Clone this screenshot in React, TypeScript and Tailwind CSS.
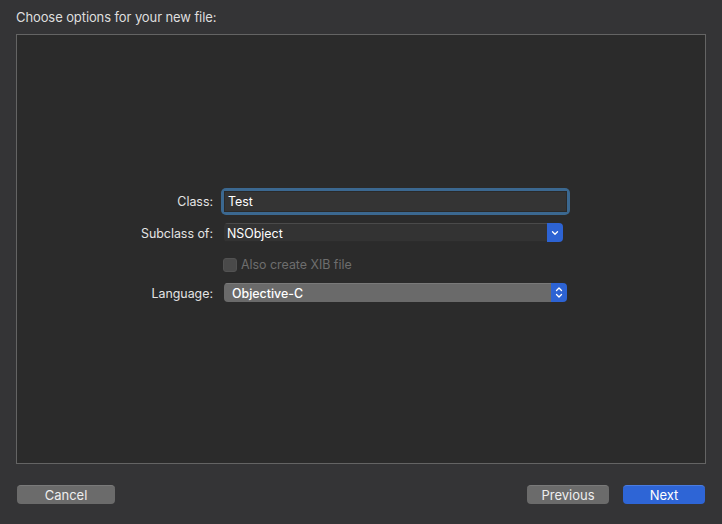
import React from "react";

function ChevronDown() {
  return (
    <svg width="8" height="6" viewBox="0 0 8 6" fill="none">
      <path d="M1.5 1.8 L4 4.2 L6.5 1.8" stroke="#ffffff" strokeWidth="1.3" strokeLinecap="round" strokeLinejoin="round" />
    </svg>
  );
}

function ChevronUpDown() {
  return (
    <svg width="8" height="13" viewBox="0 0 8 13" fill="none">
      <path d="M1.5 4.5 L4 2 L6.5 4.5" stroke="#ffffff" strokeWidth="1.3" strokeLinecap="round" strokeLinejoin="round" />
      <path d="M1.5 8.5 L4 11 L6.5 8.5" stroke="#ffffff" strokeWidth="1.3" strokeLinecap="round" strokeLinejoin="round" />
    </svg>
  );
}

export default function App() {
  return (
    <div
      className="w-[722px] h-[524px] bg-[#343436] flex flex-col text-[13px] text-[#e2e2e2] overflow-hidden"
      style={{ fontFamily: "Inter, 'Noto Sans', sans-serif" }}
    >
      <div className="h-[34px] pl-[16px] pt-[9px] leading-[16px] text-[#dedede] tracking-[-0.1px]">Choose options for your new file:</div>
      <div className="mx-[16px] h-[430px] border border-[#646464] bg-[#2b2b2b] flex flex-col pt-[153px] text-[12.4px]">
        {/* Class */}
        <div className="flex items-center h-[27px]">
          <div className="w-[196px] text-right pt-[2px] leading-none text-[#e4e4e4]">Class:</div>
          <div className="ml-[8px] w-[349px] h-[27px] rounded-[5px] bg-[#3b6890] p-[3px]">
            <div className="h-full bg-[#343434] border border-[#2a2a2a] flex items-center pl-[3px] pt-[2px] text-white leading-none">Test</div>
          </div>
        </div>
        {/* Subclass */}
        <div className="flex items-center h-[19px] mt-[8px]">
          <div className="w-[196px] text-right pt-[3px] leading-none text-[#e4e4e4]">Subclass of:</div>
          <div className="ml-[11px] w-[339px] h-[19px] flex rounded-[4px] overflow-hidden">
            <div className="flex-1 bg-[#333333] border-t border-[#4a4a4a] border-b border-b-[#2c2c2c] flex items-center pl-[3px] pt-[3px] text-white leading-none">NSObject</div>
            <div className="w-[16px] bg-[#2d63d3] flex items-center justify-center">
              <ChevronDown />
            </div>
          </div>
        </div>
        {/* Checkbox */}
        <div className="flex items-center h-[19px] mt-[13px]">
          <div className="w-[196px]" />
          <div className="ml-[10px] w-[14px] h-[14px] rounded-[3px] bg-[#4a4a4a] border border-[#525252]" />
          <div className="ml-[4px] pt-[2px] leading-none text-[#6e6e6e]">Also create XIB file</div>
        </div>
        {/* Language */}
        <div className="flex items-center h-[19px] mt-[9px]">
          <div className="w-[196px] text-right pt-[3px] leading-none text-[#e4e4e4]">Language:</div>
          <div className="ml-[11px] w-[343px] h-[19px] flex rounded-[4px] overflow-hidden">
            <div className="flex-1 bg-[#6a6a6a] border-t border-[#7a7a7a] flex items-center pl-[8px] pt-[2px] text-white font-medium leading-none">Objective-C</div>
            <div className="w-[16px] bg-[#2d63d3] flex items-center justify-center">
              <ChevronUpDown />
            </div>
          </div>
        </div>
      </div>
      <div className="flex items-center px-[17px] mt-[21px]">
        <button className="w-[98px] h-[19px] rounded-[4px] bg-[#6b6b6b] border-t border-[#7a7a7a] text-[#eeeeee] leading-none flex items-center justify-center">Cancel</button>
        <div className="flex-1" />
        <button className="w-[82px] h-[19px] rounded-[4px] bg-[#6b6b6b] border-t border-[#7a7a7a] text-[#eeeeee] leading-none flex items-center justify-center">Previous</button>
        <button className="ml-[14px] w-[82px] h-[19px] rounded-[4px] bg-[#2e65d6] border-t border-[#4a7ce0] text-white leading-none flex items-center justify-center">Next</button>
      </div>
    </div>
  );
}
